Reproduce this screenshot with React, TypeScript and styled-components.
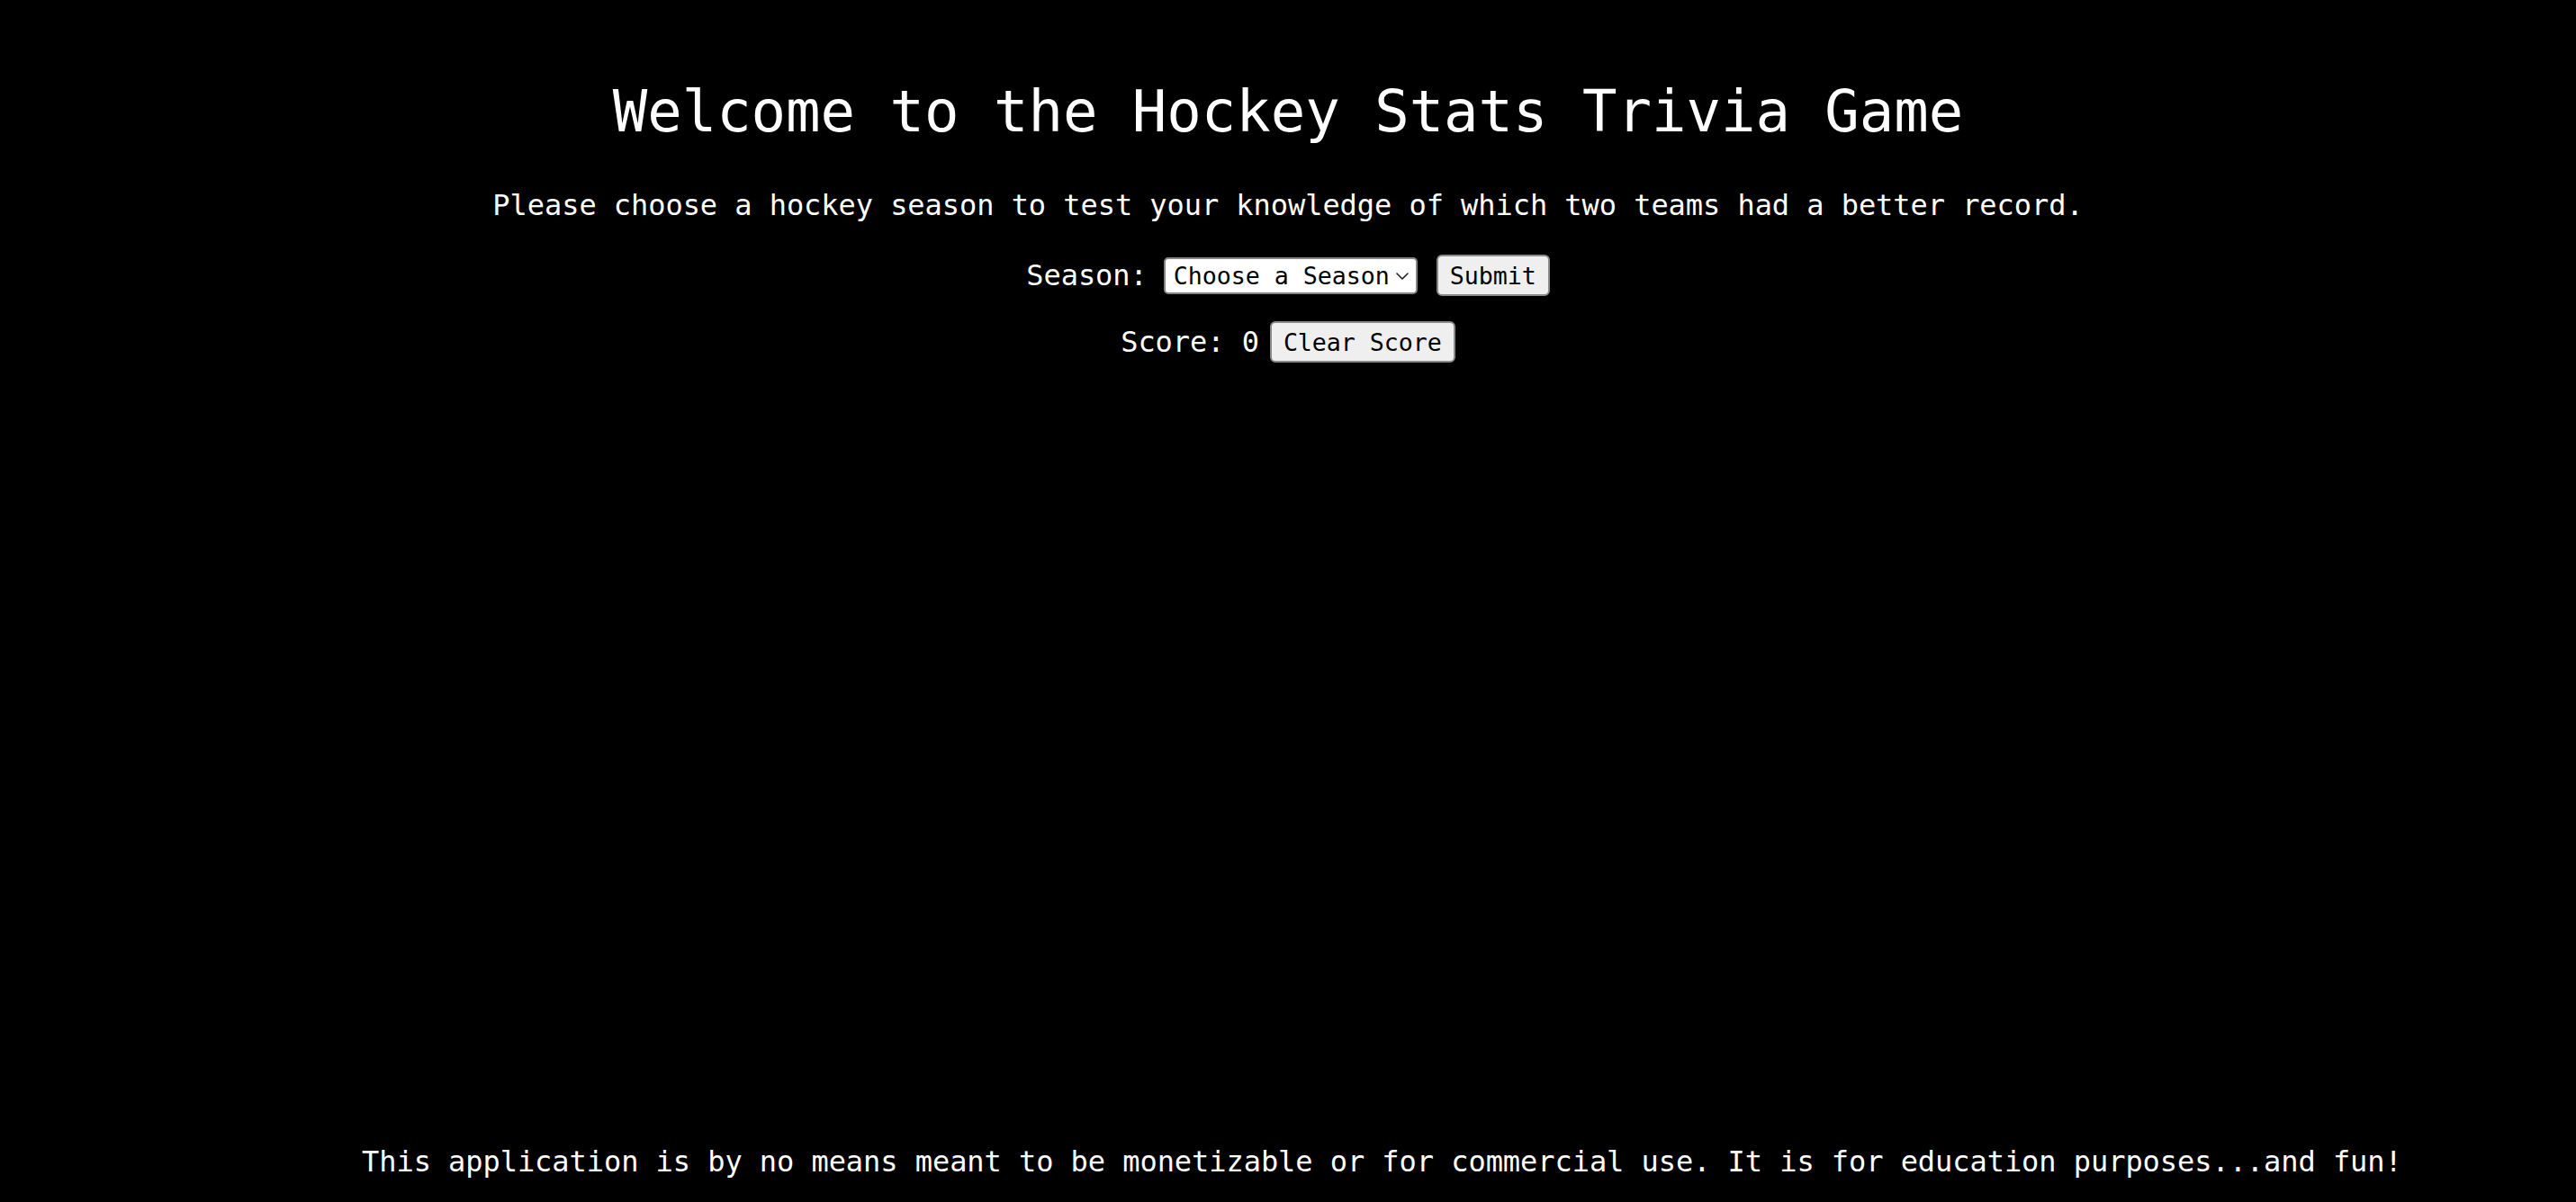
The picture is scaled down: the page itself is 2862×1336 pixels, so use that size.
import React, { useState } from 'react';
import styled, { createGlobalStyle } from 'styled-components';

const GlobalStyle = createGlobalStyle`
  html, body {
    margin: 0;
    padding: 0;
    background: #000;
  }

  body {
    color: #fff;
    font-family: "DejaVu Sans Mono", "Liberation Mono", monospace;
    letter-spacing: -0.0035em;
  }
`;

const Page = styled.div`
  display: flex;
  flex-direction: column;
  align-items: center;
  box-sizing: border-box;
  min-height: 100vh;
  padding-top: 84px;
`;

const Title = styled.h1`
  margin: 0;
  font-size: 64px;
  line-height: 80px;
  font-weight: 400;
`;

const Intro = styled.p`
  margin: 44px 0 0;
  font-size: 32px;
  line-height: 40px;
`;

const Row = styled.div<{ $top: number; $gap: number }>`
  display: flex;
  align-items: center;
  justify-content: center;
  gap: ${(p) => p.$gap}px;
  height: 46px;
  margin-top: ${(p) => p.$top}px;
`;

const Label = styled.span`
  font-size: 32px;
  line-height: 40px;
  white-space: pre;
`;

const SelectWrap = styled.div`
  position: relative;
  display: flex;
`;

const SeasonSelect = styled.select`
  appearance: none;
  box-sizing: border-box;
  width: 282px;
  height: 41px;
  margin: 0;
  padding: 0 0 0 9px;
  border: 2px solid #858585;
  border-radius: 5px;
  background: #fff;
  color: #000;
  font-family: inherit;
  font-size: 26.67px;
  letter-spacing: inherit;
  outline: none;
`;

const Chevron = styled.svg`
  position: absolute;
  right: 10px;
  top: 17px;
  width: 14px;
  height: 8px;
  pointer-events: none;
`;

const Button = styled.button`
  box-sizing: border-box;
  height: 46px;
  margin: 0;
  padding: 0 13px;
  border: 2px solid #8a8a8a;
  border-radius: 6px;
  background: #efefef;
  color: #000;
  font-family: inherit;
  font-size: 26.67px;
  letter-spacing: inherit;
  cursor: pointer;
`;

const Footer = styled.footer`
  align-self: flex-start;
  margin-top: auto;
  margin-bottom: 25px;
  padding-left: 402px;
  font-size: 32px;
  line-height: 40px;
`;

const seasons = ['2018-2019', '2019-2020', '2020-2021', '2021-2022', '2022-2023'];

function App(): JSX.Element {
  const [season, setSeason] = useState('');
  const [score, setScore] = useState(0);

  return (
    <>
      <GlobalStyle />
      <Page>
        <Title>Welcome to the Hockey Stats Trivia Game</Title>
        <Intro>
          Please choose a hockey season to test your knowledge of which two teams had a better record.
        </Intro>
        <Row $top={35} $gap={18}>
          <Label>Season:</Label>
          <Row $top={0} $gap={21}>
            <SelectWrap>
              <SeasonSelect value={season} onChange={(e) => setSeason(e.target.value)}>
                <option value="">Choose a Season</option>
                {seasons.map((s) => (
                  <option key={s} value={s}>{s}</option>
                ))}
              </SeasonSelect>
              <Chevron viewBox="0 0 14 8" fill="none">
                <path d="M1 1l6 6 6-6" stroke="#222" strokeWidth="1.6" strokeLinecap="round" strokeLinejoin="round" />
              </Chevron>
            </SelectWrap>
            <Button type="button">Submit</Button>
          </Row>
        </Row>
        <Row $top={28} $gap={12}>
          <Label>Score: {score}</Label>
          <Button type="button" onClick={() => setScore(0)}>Clear Score</Button>
        </Row>
        <Footer>
          This application is by no means meant to be monetizable or for commercial use. It is for education purposes...and fun!
        </Footer>
      </Page>
    </>
  );
}

export default App;
